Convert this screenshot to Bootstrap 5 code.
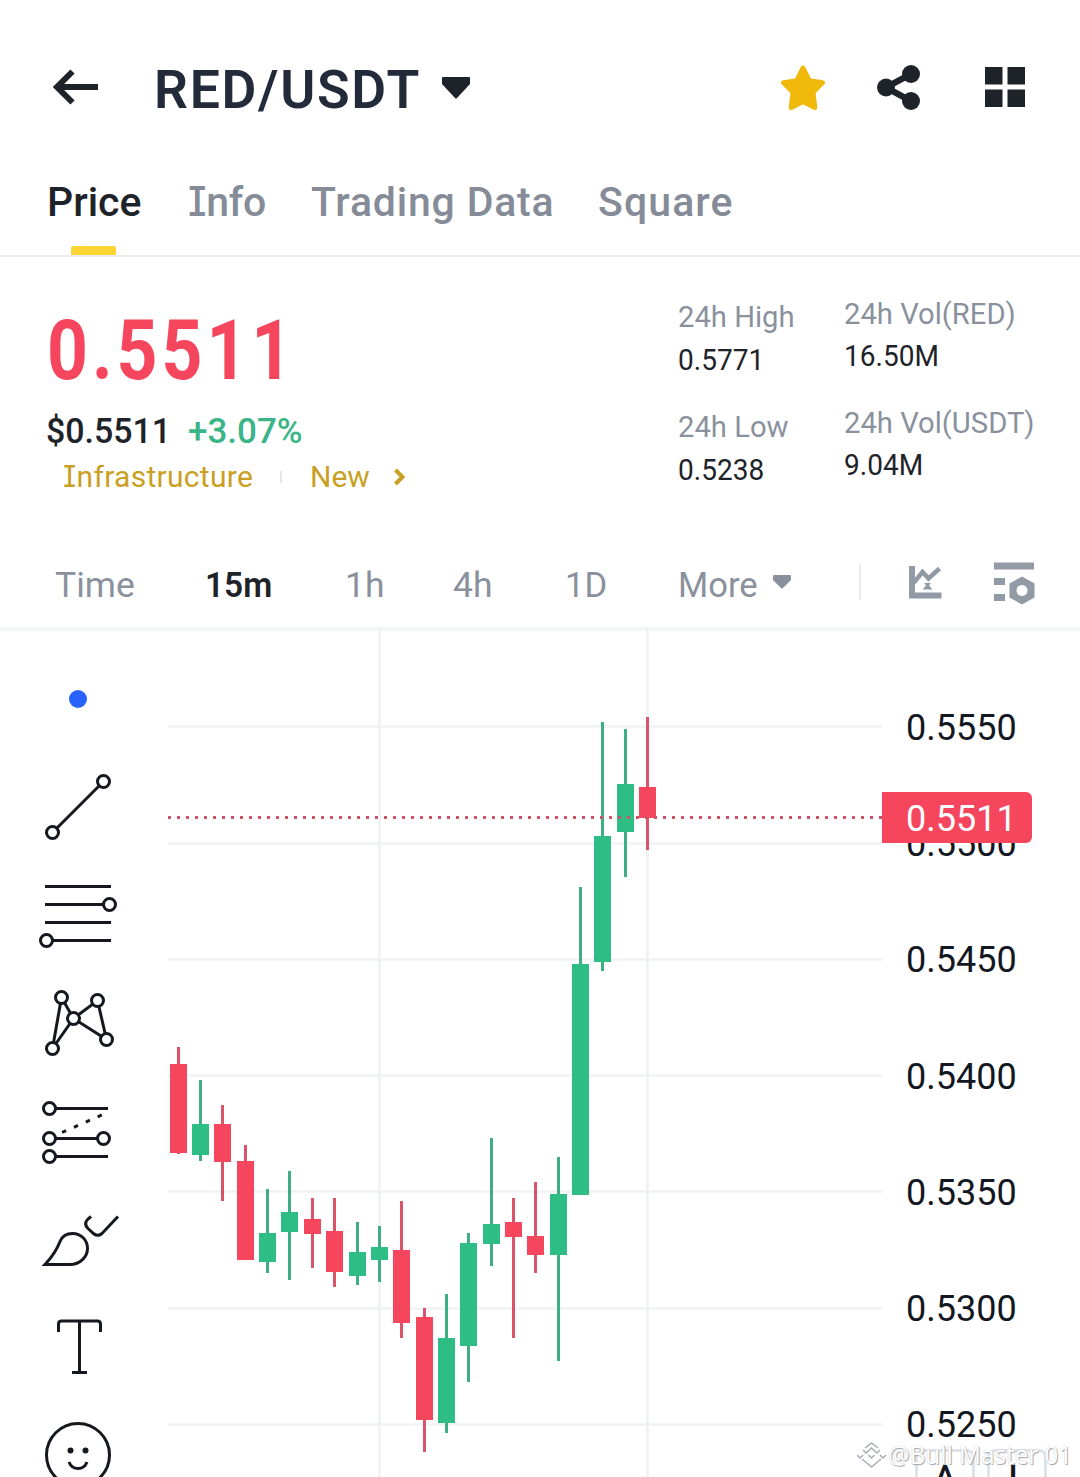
<!DOCTYPE html>
<html lang="en">
<head>
<meta charset="utf-8">
<meta name="viewport" content="width=device-width, initial-scale=1">
<title>RED/USDT</title>
<link href="https://cdn.jsdelivr.net/npm/bootstrap@5.3.0/dist/css/bootstrap.min.css" rel="stylesheet">
<style>
body{font-family:Roboto,"Noto Sans",sans-serif;background:#fff;color:#1e2329;width:1080px;height:1477px;overflow:hidden;white-space:nowrap}
svg{display:block;flex:none}
.fit{display:inline-block;transform-origin:0 50%}
.serif-i::first-letter{font-family:Inter,sans-serif;font-feature-settings:"cv08" 1,"ss02" 1;line-height:1}
.topbar{height:175px;padding-left:52px;padding-bottom:2px}
.pair{font-size:53.5px;font-weight:600;line-height:64px;width:287px;margin-left:55px;margin-right:1px;color:#232b3a;padding-top:6px;letter-spacing:1.7px}
.pair-caret{margin-top:2px}
.share-icon{margin-left:51px}
.grid-icon{margin:0 55px 0 64px}
.tabs{height:82px;padding-left:47px;border-bottom:2px solid #ededed;font-size:41px;font-weight:500;line-height:55px;color:#858c98}
.tab-on{color:#1e2329;position:relative}
.tab-on::after{content:"";position:absolute;left:24px;bottom:0;width:45px;height:9px;background:#fcd535;border-radius:2px 2px 0 0}
.t1{width:141px}.t2{width:123px}.t3{width:287px}
.t2 .fit{letter-spacing:-.3px}.t3 .fit{letter-spacing:.8px}.t4 .fit{letter-spacing:1.1px}
.summary{height:284px}
.quote{width:678px;padding:49px 0 0 47px}
.last{font-size:83px;font-weight:700;line-height:90px;height:90px;color:#f6465d}
.last .fit{transform:scaleX(.86);letter-spacing:4.6px}
.sub{font-size:35.5px;font-weight:500;line-height:48px;height:48px;margin-top:11px}
.sub .spot{width:141px}
.spot .fit{transform:translateX(-1px) scaleX(.955)}
.up{color:#3bb587}
.up .fit{transform:scaleX(.985)}
.topics{font-size:30px;line-height:44px;color:#c99f24;padding-left:16px;margin-top:0}
.topic-a{width:217px;letter-spacing:.3px}
.topic-b{width:83px;margin-left:27px}
.stat{font-size:29.5px;line-height:43px}
.stat .lbl{color:#8a919d;height:43px}
.stat .lbl .fit{transform:scaleX(.99)}
.stat .val{height:43px}
.stat .val .fit{transform:scaleX(.95)}
.stat-a{width:166px;padding-top:39px}
.stat-b{padding-top:36px}
.stat-b .val{line-height:41px}
.stat-b .gap-stat{margin-bottom:23px}
.gap-stat{margin-bottom:24px}
.frames{height:90px;padding-left:55px;padding-top:22px;border-bottom:4px solid #f5f6f6;font-size:35.5px;line-height:44px;color:#8a919d}
.frames .on{color:#1e2329;font-weight:600}
.frames .on .fit{transform:scaleX(.94)}
.f1{width:150px}.f2{width:140px}.f3{width:108px}.f4{width:112px}.f5{width:113px}.f6{width:95px}
.f5 .fit,.f6 .fit{transform:scaleX(.975)}
.caret{padding-top:4px}
.rule{width:2px;height:36px;background:#e9ebee;margin:1px 47px 0 68px}
.trend{margin-top:2px}
.prefs{margin-left:51px;margin-top:-1px}
.tools{width:168px}
.tools svg{fill:none;stroke:#15181f;stroke-width:3}
.tools circle{fill:#fff}
.tools .dot{fill:#2962ff;stroke:none}
.tools .eye{fill:#15181f;stroke:none}
#chart{margin-top:-4px}
.axis{width:198px;font-size:36px;color:#131722;position:relative;padding-top:39px}
.axis .tick{height:116.2px;line-height:116.2px;padding-left:24px}
.pill{position:absolute;left:0;top:161px;width:150px;height:51px;line-height:54px;background:#f6465d;color:#fff;border-radius:0 6px 6px 0;padding-left:24px}
.scale-btn{position:absolute;top:818px;width:60px;height:60px;border:3px solid #dfe2ea;border-radius:8px;font-weight:600;font-size:30px;text-align:center;line-height:48px}
.scale-auto{left:33px}.scale-log{left:105px}
.mark-by{position:absolute;left:857px;top:1438px;width:223px;height:32px;color:#fff;font:25px/32px "Noto Sans",sans-serif;text-shadow:1px 1px 1px #a0a4aa,0 0 1px #b6bac0}
.mark-by .fit{transform:translateX(1px) scaleX(.965)}
</style>
</head>
<body>
<header class="topbar d-flex align-items-center">
  <svg width="47" height="40" viewBox="52 67 47 40" fill="none" stroke="#1e2329" stroke-width="6"><path d="M98 87H57M72.500 71.500 57 87l15.500 15.500"/></svg>
  <div class="pair"><span class="fit">RED/USDT</span></div>
  <svg class="pair-caret" width="28" height="22" viewBox="0 0 28 22" fill="#1e2329"><path d="M.500 0h27L28 .500V7L15 21q-1 1-2 0L0 7V.500z"/></svg>
  <svg class="ms-auto" width="46" height="48" viewBox="780 63 46 48"><path d="M803 68l6.200 12.600 13.300 2-9.500 9.700 1.800 15.200-11.800-6-11.800 6 1.800-15.200-9.500-9.700 13.300-2z" fill="#f0b90b" stroke="#f0b90b" stroke-width="5" stroke-linejoin="round"/></svg>
  <svg class="share-icon" width="44" height="46" viewBox="877 64 44 46" fill="#1e2329"><path d="M911 74 886 87.500l25 13.500" fill="none" stroke="#1e2329" stroke-width="6.500"/><circle cx="886" cy="87.500" r="9"/><circle cx="911" cy="74" r="9"/><circle cx="911" cy="101" r="9"/></svg>
  <svg class="grid-icon" width="40" height="40" viewBox="0 0 40 40" fill="#1e2329"><path d="M0 0h17.500v17.500H0zM22.500 0H40v17.500H22.500zM0 22.500h17.500V40H0zM22.500 22.500H40V40H22.500z"/></svg>
</header>
<nav class="tabs d-flex">
  <div class="t1 tab-on"><span class="fit">Price</span></div>
  <div class="t2"><span class="fit serif-i">Info</span></div>
  <div class="t3"><span class="fit">Trading Data</span></div>
  <div class="t4"><span class="fit">Square</span></div>
</nav>
<section class="summary d-flex">
  <div class="quote">
    <div class="last"><span class="fit">0.5511</span></div>
    <div class="sub d-flex"><div class="spot"><span class="fit">$0.5511</span></div><div class="up"><span class="fit">+3.07%</span></div></div>
    <div class="topics d-flex align-items-center"><div class="topic-a"><span class="fit serif-i">Infrastructure</span></div><svg width="3" height="12"><rect width="2" height="12" fill="#e4e7ea"/></svg><div class="topic-b"><span class="fit">New</span></div><svg width="13" height="18" viewBox="0 0 13 18" fill="none" stroke="#c99f24" stroke-width="4"><path d="M2.500 2 9.500 9l-7 7"/></svg></div>
  </div>
  <div class="stat stat-a">
    <div class="lbl"><span class="fit">24h High</span></div><div class="val gap-stat"><span class="fit">0.5771</span></div>
    <div class="lbl"><span class="fit">24h Low</span></div><div class="val"><span class="fit">0.5238</span></div>
  </div>
  <div class="stat stat-b">
    <div class="lbl"><span class="fit">24h Vol(RED)</span></div><div class="val gap-stat"><span class="fit">16.50M</span></div>
    <div class="lbl"><span class="fit">24h Vol(USDT)</span></div><div class="val"><span class="fit">9.04M</span></div>
  </div>
</section>
<nav class="frames d-flex align-items-start">
  <div class="f1"><span class="fit">Time</span></div><div class="f2 on"><span class="fit">15m</span></div><div class="f3"><span class="fit">1h</span></div><div class="f4"><span class="fit">4h</span></div><div class="f5"><span class="fit">1D</span></div><div class="f6"><span class="fit">More</span></div>
  <svg class="caret mt-2" width="18" height="20" viewBox="0 0 18 16" fill="#8a919d"><path d="M.500 0h17l.500.500V5l-8 8q-1 1-2 0L0 5V.500z"/></svg>
  <div class="rule"></div>
  <svg class="trend" width="34" height="36" viewBox="908 565 34 36" fill="none" stroke="#929aa5" stroke-width="6"><path d="M912 566v29.500h29.500"/><path d="M914 582.500l8.500-10.500 6 6.500L939.500 568.500" stroke-width="4.500"/><path d="M922.500 589.500l3.500-4-2-2.500h7l-2 2.500 3.500 4z" fill="#929aa5" stroke="none"/></svg>
  <svg class="prefs" width="42" height="43" viewBox="993 562 42 43" fill="#929aa5"><path d="M994 562.500h40v7h-40zM994 578h11v7h-11zM994 594h11v7h-11z"/><path fill-rule="evenodd" d="M1022 576.500l12.500 7v14l-12.500 7-12.500-7v-14zM1022 585a5.500 5.500 0 1 0 .01 0z"/></svg>
</nav>
<main class="d-flex">
  <div class="tools">
    <svg width="168" height="122" viewBox="0 631 168 122"><circle class="dot" cx="78" cy="699" r="9"/></svg>
    <svg width="168" height="108" viewBox="0 753 168 108"><path d="M52.500 832.500 103.500 781.500"/><circle cx="52.500" cy="832.500" r="6"/><circle cx="103.500" cy="781.500" r="6"/></svg>
    <svg width="168" height="108" viewBox="0 861 168 108"><path d="M45 886.500h66M45 904.500h66M45 922.500h66M45 940.500h66"/><circle cx="109.500" cy="904.500" r="6"/><circle cx="46.500" cy="940.500" r="6"/></svg>
    <svg width="168" height="108" viewBox="0 969 168 108"><path d="M61.500 997.500l-9 51 21-30-12-21M73.500 1018.500l24-18 9 39z"/><circle cx="61.500" cy="997.500" r="6"/><circle cx="97.500" cy="1000.500" r="6"/><circle cx="73.500" cy="1018.500" r="6"/><circle cx="106.500" cy="1039.500" r="6"/><circle cx="52.500" cy="1048.500" r="6"/></svg>
    <svg width="168" height="108" viewBox="0 1077 168 108"><path d="M50 1108.500h58M50 1138.500h54M50 1156.500h58"/><path d="M62 1132.500 104 1114" stroke-dasharray="4.500 8.500"/><circle cx="49.500" cy="1108.500" r="6"/><circle cx="49.500" cy="1138.500" r="6"/><circle cx="103.500" cy="1138.500" r="6"/><circle cx="49.500" cy="1156.500" r="6"/></svg>
    <svg width="168" height="108" viewBox="0 1185 168 108"><path d="M45 1264.500H70C80 1264.500 87.500 1257 87.500 1248.500S81 1233.500 72.500 1233.500C66 1233.500 62 1236.500 60 1241.500 57.500 1248 53 1256 45 1264.500Z"/><path d="M91 1216.500l-3 2.500c-3 3-3 6.500 0 9.500l5.500 5c3 2.500 5.500 2.500 8.500 0L118 1216.500"/></svg>
    <svg width="168" height="108" viewBox="0 1293 168 108"><path d="M58.500 1332v-8q0-3 3-3h36q3 0 3 3v8M79.500 1321v51M72 1372.500h15"/></svg>
    <svg width="168" height="76" viewBox="0 1401 168 76"><circle cx="78" cy="1455" r="31.500"/><circle class="eye" cx="70.500" cy="1450.500" r="3"/><circle class="eye" cx="85.500" cy="1450.500" r="3"/><path d="M69 1462q2.500 6.500 9 6.500t9-6.500"/></svg>
  </div>
  <svg id="chart" width="714" height="850" viewBox="168 627 714 850"></svg>
  <div class="axis">
    <div class="tick">0.5550</div><div class="tick">0.5500</div><div class="tick">0.5450</div><div class="tick">0.5400</div><div class="tick">0.5350</div><div class="tick">0.5300</div><div class="tick">0.5250</div>
    <div class="pill">0.5511</div>
    <div class="scale-btn scale-auto">A</div><div class="scale-btn scale-log">L</div>
  </div>
</main>
<div class="mark-by d-flex"><svg width="30" height="32" viewBox="0 0 30 32" fill="none" stroke="#a9adb4" stroke-width="1.500"><path d="M6 12l3 3 5.500-5 5.500 5 3-3M0 17l3 3 3-3M11.500 17l3 3 3-3M23 17l3 3 3-3M5 21l9.500 8 9.500-8M8 10l6.500-5L21 10"/></svg><span class="fit">@Bull Master 01</span></div>
<script>
// x, rising, body top, body bottom, high, low
const candles=[[178.5,0,1064,1153,1047,1154],[200.5,1,1124,1155,1080,1161],[222.5,0,1124,1162,1105,1201],[245.5,0,1161,1260,1145,1260],[267.5,1,1233,1262,1189,1273],[289.5,1,1212,1232,1171,1280],[312.5,0,1219,1234,1198,1268],[334.5,0,1231,1272,1198,1287],[357.5,1,1252,1276,1222,1285],[379.5,1,1247,1260,1226,1282],[401.5,0,1250,1323,1201,1338],[424.5,0,1317,1420,1308,1452],[446.5,1,1338,1423,1294,1433],[468.5,1,1243,1346,1233,1382],[491.5,1,1224,1244,1138,1266],[513.5,0,1222,1237,1198,1338],[535.5,0,1236,1255,1182,1273],[558.5,1,1194,1255,1157,1361],[580.5,1,964,1195,887,1195],[602.5,1,836,962,722,971],[625.5,1,784,832,729,877],[647.5,0,787,818,717,850]];
let s='';
[726.5,843.5,959.5,1075.5,1191.5,1308.5,1424.5].forEach(y=>s+=`<path d="M168 ${y}H882" stroke="#f0f3f3" stroke-width="2.500"/>`);
[379.5,647.5].forEach(x=>s+=`<path d="M${x} 627V1477" stroke="#eef1f2" stroke-width="2.500"/>`);
candles.forEach(([x,up,t,b,h,l])=>{
  s+=`<path d="M${x} ${h}V${l}" stroke="${up?'#3fae83':'#d9536a'}" stroke-width="3"/><rect x="${x-8.5}" y="${t}" width="17" height="${b-t}" fill="${up?'#2ebd85':'#f6465d'}"/>`;
});
s+='<path d="M168 817.500H882" stroke="#cc5468" stroke-width="3" stroke-dasharray="3 6"/>';
document.getElementById('chart').innerHTML=s;
</script>
<script src="https://cdn.jsdelivr.net/npm/bootstrap@5.3.0/dist/js/bootstrap.bundle.min.js"></script>
</body>
</html>
